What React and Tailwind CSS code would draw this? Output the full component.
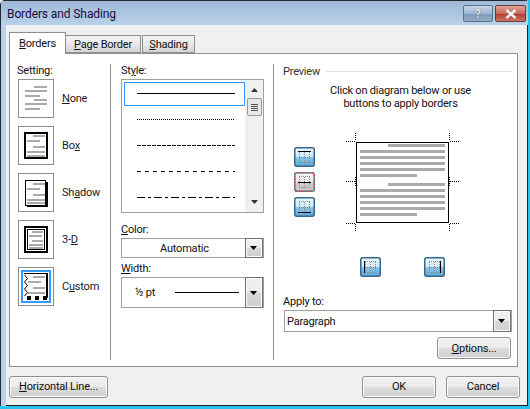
const F = { fontFamily: 'Roboto,"Noto Sans",sans-serif' };

function Btn({ className = "", children }) {
  return (
    <div className={`flex items-center justify-center rounded-[3px] border border-[#8e8f8f] bg-[linear-gradient(#f2f2f2_0%,#ebebeb_48%,#dddddd_50%,#cfcfcf_100%)] shadow-[inset_0_0_0_1px_#fbfbfb] ${className}`}>
      {children}
    </div>
  );
}

function Arrow() {
  return (
    <svg width="8" height="4" viewBox="0 0 8 4"><path d="M0 0h7L3.500 4z" fill="#000" /></svg>
  );
}

function DropBtn({ h }) {
  return (
    <div className={`flex w-[18px] items-center justify-center border border-[#707070] bg-[linear-gradient(#f2f2f2,#ebebeb_48%,#d8d8d8_52%,#cfcfcf)] shadow-[inset_0_0_0_1px_#fbfbfb] ${h}`}>
      <Arrow />
    </div>
  );
}

function Rows({ rows }) {
  return (
    <g fill="#aaa">
      {rows.map((r, i) => (
        <rect key={i} x={r[0]} y={r[1]} width={r[2]} height="2" />
      ))}
    </g>
  );
}

function SettingIcon({ type }) {
  return (
    <svg width="34" height="37" viewBox="0 0 34 37" shapeRendering="crispEdges">
      {type === "none" && (
        <Rows rows={[[15, 6, 13], [6, 10, 22], [6, 15, 15], [15, 19, 13], [6, 23, 22], [6, 28, 15]]} />
      )}
      {type === "box" && (
        <>
          <path d="M5 5h24v27H5z M7 7v23h20V7z" fill="#000" fillRule="evenodd" />
          <Rows rows={[[14, 8, 12], [8, 13, 13], [14, 19, 12], [8, 24, 18], [8, 28, 18]]} />
        </>
      )}
      {type === "shadow" && (
        <>
          <rect x="6.500" y="6.500" width="20" height="25" fill="none" stroke="#000" />
          <path d="M27 8h2v25H8v-2h19z" fill="#000" />
          <Rows rows={[[14, 9, 12], [8, 14, 13], [14, 20, 12], [8, 25, 18], [8, 28, 18]]} />
        </>
      )}
      {type === "3d" && (
        <>
          <path d="M5 5h24v27H5z M7 7v23h20V7z" fill="#000" fillRule="evenodd" />
          <rect x="8.500" y="8.500" width="17" height="20" fill="none" stroke="#000" />
          <Rows rows={[[13, 10, 11], [10, 14, 13], [13, 19, 11], [10, 23, 14], [10, 26, 14]]} />
        </>
      )}
      {type === "custom" && (
        <>
          <rect x="3" y="3" width="28" height="31" fill="none" stroke="#3399ff" strokeWidth="2" />
          <path d="M5 5h24v25h-2V6H5z" fill="#000" />
          <path d="M5.500 7l3 3.500-3 3.500 3 3.500-3 3.500 3 3.500-3 3.500" fill="none" stroke="#000" shapeRendering="auto" />
          <rect x="8" y="28" width="4" height="4" fill="#000" />
          <rect x="16" y="28" width="4" height="4" fill="#000" />
          <rect x="24" y="28" width="4" height="4" fill="#000" />
          <Rows rows={[[14, 8, 12], [9, 13, 13], [14, 19, 12], [9, 24, 17]]} />
        </>
      )}
    </svg>
  );
}

function Setting({ type, label }) {
  return (
    <div className="flex items-center">
      <div className="flex h-[39px] w-[36px] items-center justify-center border border-[#8f8f8f] bg-white">
        <SettingIcon type={type} />
      </div>
      <span className="ml-2 text-[#1a1a1a]">{label}</span>
    </div>
  );
}

function LineRow({ dash, selected }) {
  return (
    <div className={`mb-[2px] flex h-[24px] items-center pl-[12px] ${selected ? "border border-[#3399ff]" : "border border-transparent"}`}>
      <svg width="98" height="2" className="block" shapeRendering="crispEdges">
        <line x1="0" x2="98" y1="0.500" y2="0.500" stroke="#000" strokeWidth="1" strokeDasharray={dash} />
      </svg>
    </div>
  );
}

function BorderBtn({ variant, active }) {
  const bars = {
    top: <rect x="4" y="4" width="13" height="1" fill="#000" />,
    mid: <rect x="4" y="10" width="13" height="1" fill="#000" />,
    bottom: <rect x="4" y="15" width="13" height="1" fill="#000" />,
    left: <rect x="4" y="4" width="1" height="12" fill="#000" />,
    right: <rect x="16" y="4" width="1" height="12" fill="#000" />,
  };
  const dots = [];
  [4, 10, 15].forEach((y) => {
    for (let x = 5; x < 17; x += 2) dots.push([x, y]);
  });
  [5, 10, 15].forEach((x) => {
    for (let y = 5; y < 16; y += 2) dots.push([x, y]);
  });
  return (
    <svg width="21" height="20" viewBox="0 0 21 20" className="block">
      <defs>
        <linearGradient id="bb" x1="0" x2="0" y1="0" y2="1">
          <stop offset="0" stopColor="#eef7fc" />
          <stop offset="0.48" stopColor="#d4e8f5" />
          <stop offset="0.5" stopColor="#92c8e8" />
          <stop offset="1" stopColor="#5fa7d6" />
        </linearGradient>
        <linearGradient id="ba" x1="0" x2="0" y1="0" y2="1">
          <stop offset="0" stopColor="#f6f6f6" />
          <stop offset="0.48" stopColor="#e8e8e8" />
          <stop offset="0.5" stopColor="#d0d0d0" />
          <stop offset="1" stopColor="#c4c4c4" />
        </linearGradient>
      </defs>
      <rect x="0.750" y="0.750" width="19.500" height="18.500" rx="2" fill={active ? "url(#ba)" : "url(#bb)"} stroke={active ? "#4b8cc0" : "#35688f"} strokeWidth="1.500" />
      {active && (
        <rect x="0.750" y="0.750" width="19.500" height="18.500" rx="2" fill="none" stroke="#e0401c" strokeWidth="1.500" strokeDasharray="1.500 1.500" />
      )}
      <g fill="#8a8a8a" shapeRendering="crispEdges">
        {dots.map((d, i) => (
          <rect key={i} x={d[0]} y={d[1]} width="1" height="1" />
        ))}
      </g>
      <g shapeRendering="crispEdges">{bars[variant]}</g>
    </svg>
  );
}

function Dots({ x, y, n, v }) {
  const out = [];
  for (let i = 0; i < n; i++) {
    out.push(<rect key={i} x={v ? x : x + i * 2} y={v ? y + i * 2 : y} width="1" height="1" fill="#000" />);
  }
  return <>{out}</>;
}

function Diagram() {
  const rows = [
    [32, 57], [4, 85], [4, 85], [4, 85], [4, 85], [4, 57],
    [32, 57], [4, 85], [4, 85], [4, 85], [4, 85], [4, 57],
  ];
  const ys = [2, 8, 14, 20, 26, 32, 41, 47, 53, 59, 65, 71];
  return (
    <svg width="93" height="81" viewBox="0 0 93 81" className="block overflow-visible" shapeRendering="crispEdges">
      <rect x="0.500" y="0.500" width="92" height="80" fill="#fff" stroke="#000" />
      {rows.map((r, i) => (
        <rect key={i} x={r[0]} y={ys[i]} width={r[1]} height="3" fill="#aaa" />
      ))}
      <Dots x={-10} y={-1} n={5} />
      <Dots x={-1} y={-9} n={4} v />
      <Dots x={94} y={-1} n={5} />
      <Dots x={93} y={-9} n={4} v />
      <Dots x={-10} y={81} n={5} />
      <Dots x={-1} y={82} n={4} v />
      <Dots x={94} y={81} n={5} />
      <Dots x={93} y={82} n={4} v />
      <Dots x={-10} y={39} n={5} />
      <Dots x={-1} y={35} n={5} v />
      <Dots x={94} y={39} n={5} />
      <Dots x={93} y={35} n={5} v />
    </svg>
  );
}

export default function App() {
  return (
    <div style={F} className="relative h-[409px] w-[530px] overflow-hidden bg-[#f0f0f0] text-[11px] leading-[14px] tracking-[-0.2px] text-[#111]">
      <div className="flex h-[409px] w-[530px] flex-col rounded-t-[5px] border border-[#1f2a33] border-b-0 border-r-0 bg-[#b9d1ea]">
        <div className="flex h-[24px] shrink-0 items-center justify-between bg-[linear-gradient(#9fb9d6,#b9d1ea)] pl-[6px] pr-[4px]">
          <span className="pt-[2px] text-[12px] tracking-[-0.1px] text-[#1a0a40]">Borders and Shading</span>
          <div className="flex gap-[2px] self-start pt-[4px]">
            <div className="flex h-[17px] w-[30px] items-center justify-center rounded-[2px] border border-[#5d6f83] bg-[linear-gradient(#c6d6e8,#9db6d1_50%,#7f9cbb_52%,#90aac6)] font-bold text-[12px] text-[#e8e8e8] [text-shadow:0_0_1px_#333]">?</div>
            <div className="flex h-[17px] w-[31px] items-center justify-center rounded-[2px] border border-[#6d3a36] bg-[linear-gradient(#e0a397,#c7695c_50%,#b03f2e_52%,#c77468)]">
              <svg width="12" height="10" viewBox="0 0 12 10"><path d="M1.500 1l9 8M10.500 1l-9 8" stroke="#eee" strokeWidth="2.500" /></svg>
            </div>
          </div>
        </div>

        <div className="ml-[5px] mr-[2px] mb-[3px] flex flex-1 flex-col border-r border-b border-[#222] bg-[#f0f0f0] pl-[3px] pr-[7px]">
          <div className="flex h-[28px] items-end">
            <div className="z-10 -mb-px flex h-[22px] w-[57px] items-center justify-center border border-b-0 border-[#8f8f8f] bg-white pt-px"><span><u>B</u>orders</span></div>
            <div className="flex h-[18px] w-[75px] items-center justify-center border border-l-0 border-[#8f8f8f] bg-[linear-gradient(#f3f3f3,#e9e9e9_50%,#d5d5d5)] pt-px"><span><u>P</u>age Border</span></div>
            <div className="ml-px flex h-[18px] w-[53px] items-center justify-center border border-[#8f8f8f] bg-[linear-gradient(#f3f3f3,#e9e9e9_50%,#d5d5d5)] pt-px"><span><u>S</u>hading</span></div>
          </div>

          <div className="mr-[2px] flex h-[314px] border border-[#8f8f8f] bg-white pt-[10px]">
            <div className="flex h-[296px] w-[101px] flex-col border-r border-[#8f8f8f] pl-[7px]">
              <div className="h-[15px]">Setting:</div>
              <div className="flex flex-col gap-[8px] pl-px">
                <Setting type="none" label={<><u>N</u>one</>} />
                <Setting type="box" label={<>Bo<u>x</u></>} />
                <Setting type="shadow" label={<>Sh<u>a</u>dow</>} />
                <Setting type="3d" label={<>3-<u>D</u></>} />
                <Setting type="custom" label={<>C<u>u</u>stom</>} />
              </div>
            </div>

            <div className="flex h-[296px] w-[163px] flex-col border-r border-[#8f8f8f] pl-[10px]">
              <div className="h-[15px]">St<u>y</u>le:</div>
              <div className="flex h-[134px] w-[143px] border border-[#a0a0a0]">
                <div className="flex-1 pl-[2px] pt-[2px]">
                  <LineRow selected />
                  <LineRow dash="1 1" />
                  <LineRow dash="4 1" />
                  <LineRow dash="4 4" />
                  <LineRow dash="8 3 3 3" />
                </div>
                <div className="flex w-[18px] flex-col items-center justify-between bg-[#f0f0f0] py-[8px]">
                  <div className="flex w-full flex-col items-center">
                    <svg width="7" height="4" viewBox="0 0 7 4"><path d="M3.500 0L7 4H0z" fill="#333" /></svg>
                    <div className="mt-[6px] flex h-[18px] w-[15px] flex-col items-center justify-center gap-px rounded-[2px] border border-[#9a9a9a] bg-[#e8e8e8]">
                      <div className="h-px w-[7px] bg-[#555]" />
                      <div className="h-px w-[7px] bg-[#555]" />
                      <div className="h-px w-[7px] bg-[#555]" />
                      <div className="h-px w-[7px] bg-[#555]" />
                    </div>
                  </div>
                  <svg width="7" height="4" viewBox="0 0 7 4"><path d="M0 0h7L3.500 4z" fill="#333" /></svg>
                </div>
              </div>
              <div className="mt-[9px] h-[16px] leading-[16px]"><u>C</u>olor:</div>
              <div className="flex h-[20px] w-[143px] items-center justify-between border border-[#a0a0a0] pl-[38px]">
                <span className="pt-px">Automatic</span>
                <DropBtn h="h-[20px]" />
              </div>
              <div className="mt-[3px] h-[16px] leading-[16px]"><u>W</u>idth:</div>
              <div className="flex h-[31px] w-[143px] items-center border border-[#a0a0a0]">
                <span className="ml-[13px] w-[40px]">½ pt</span>
                <div className="h-px w-[65px] bg-black" />
                <div className="ml-[6px]"><DropBtn h="h-[31px]" /></div>
              </div>
            </div>

            <div className="flex flex-1 flex-col pl-[9px] pr-[5px]">
              <div className="flex h-[15px] items-center">
                <span className="text-[#333]">Preview</span>
                <div className="ml-[6px] h-px flex-1 bg-[#d5dfe5]" />
              </div>
              <div className="mt-[5px] pl-[6px] text-center leading-[13px]">
                Click on diagram below or use<br />buttons to apply borders
              </div>
              <div className="mt-[9px] flex h-[135px] pl-[11px]">
                <div className="mt-[28px] flex flex-col gap-[5px]">
                  <BorderBtn variant="top" />
                  <BorderBtn variant="mid" active />
                  <BorderBtn variant="bottom" />
                </div>
                <div className="ml-[41px] mt-[23px]"><Diagram /></div>
              </div>
              <div className="mt-[3px] flex gap-[43px] pl-[77px]">
                <BorderBtn variant="left" />
                <BorderBtn variant="right" />
              </div>
              <div className="mt-[17px] h-[16px] leading-[16px]">Apply to:</div>
              <div className="ml-px flex h-[22px] w-[228px] items-center justify-between border border-[#a0a0a0] pl-[2px]">
                <span className="pt-px">Paragraph</span>
                <DropBtn h="h-[22px]" />
              </div>
              <div className="mt-[5px] flex justify-end pr-[1px]">
                <Btn className="h-[22px] w-[74px] pt-px"><span><u>O</u>ptions...</span></Btn>
              </div>
            </div>
          </div>

          <div className="flex items-start justify-between pt-[9px]">
            <Btn className="h-[22px] w-[99px]"><span><u>H</u>orizontal Line...</span></Btn>
            <div className="flex gap-[10px]">
              <Btn className="h-[22px] w-[74px]">OK</Btn>
              <Btn className="h-[22px] w-[74px]">Cancel</Btn>
            </div>
          </div>
        </div>
      </div>
      <div className="absolute bottom-0 left-0 h-[3px] w-full bg-[#26c4ee]" />
      <div className="absolute right-0 top-0 h-full w-[2px] bg-[#26c4ee]" />
    </div>
  );
}
